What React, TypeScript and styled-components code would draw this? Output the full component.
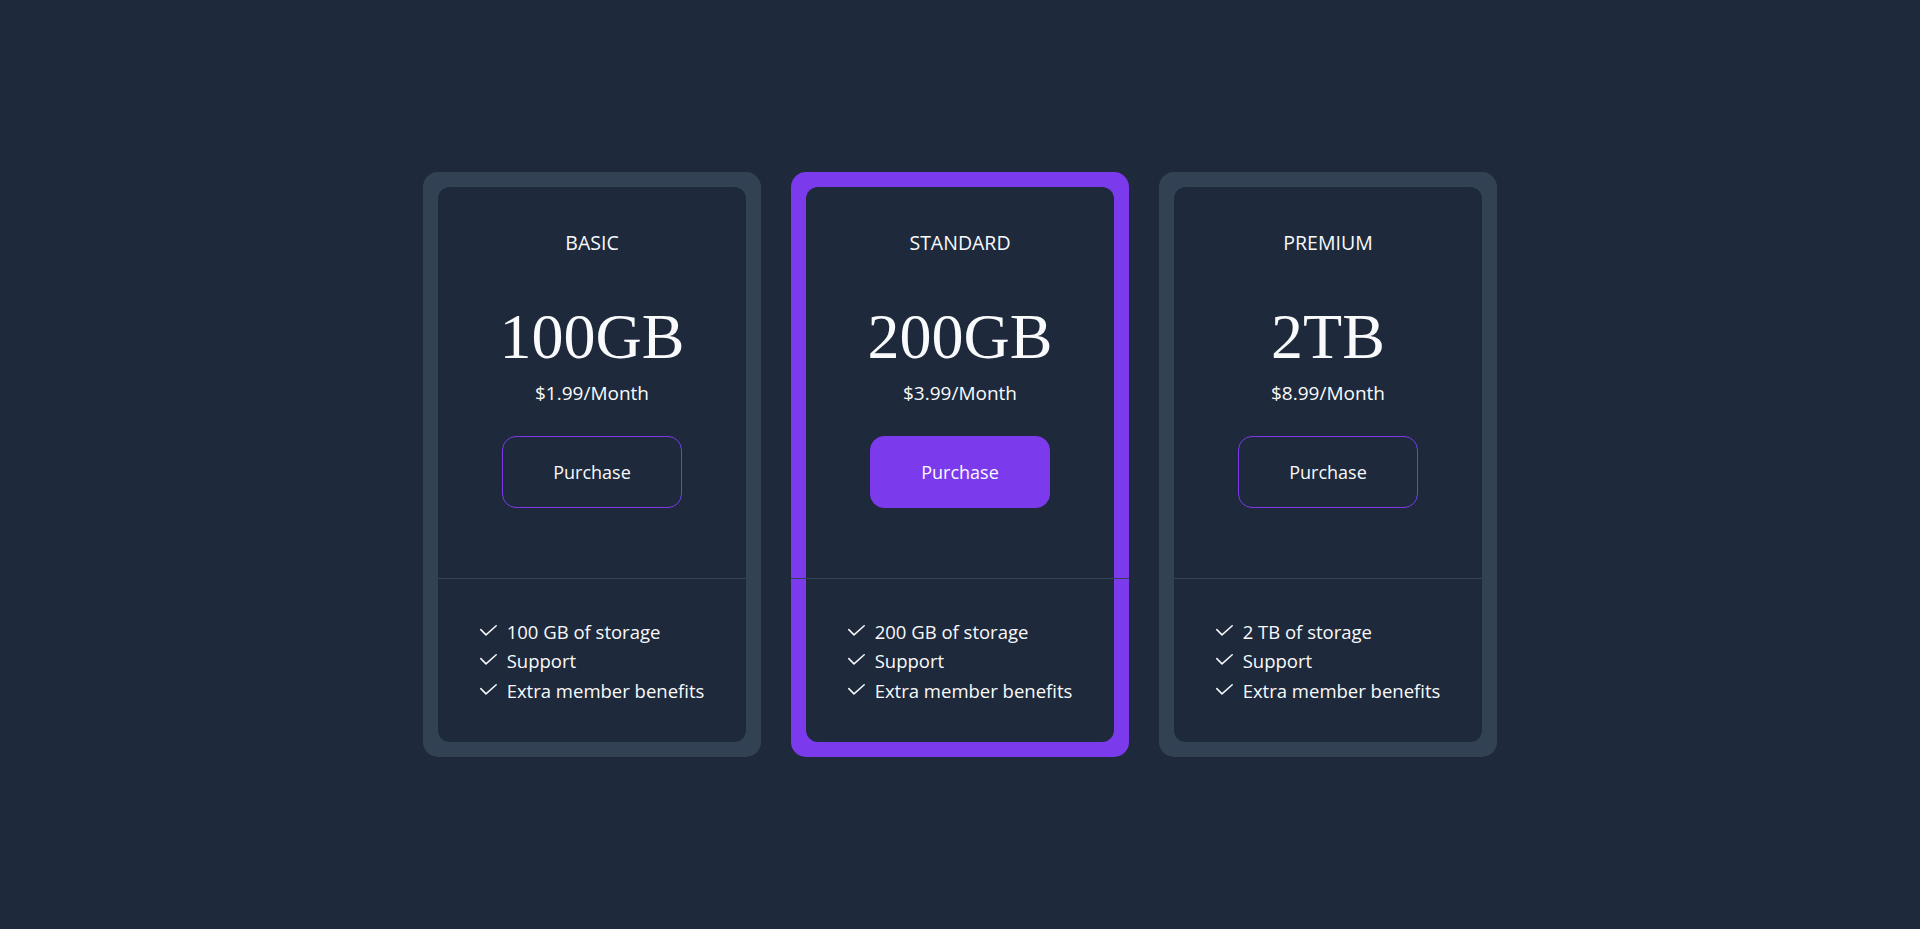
import React from "react";
import styled, { createGlobalStyle } from "styled-components";

const GlobalStyle = createGlobalStyle`
  * { box-sizing: border-box; }
  html, body { margin: 0; padding: 0; }
  body {
    background: #1e293b;
    color: #f8fafc;
    font-family: "Segoe UI", "Open Sans", "Noto Sans", sans-serif;
  }
`;

const Page = styled.main`
  min-height: 929px;
  display: flex;
  align-items: center;
  justify-content: center;
`;

const Plans = styled.section`
  display: flex;
  gap: 30px;
`;

const Frame = styled.article<{ $featured?: boolean }>`
  width: 338px;
  padding: 15px;
  border-radius: 15px;
  background: ${(p) => (p.$featured ? "#7c3aed" : "#334155")};
`;

const Inner = styled.div`
  background: #1e293b;
  border-radius: 12px;
  display: flex;
  flex-direction: column;
`;

const Top = styled.div`
  display: flex;
  flex-direction: column;
  align-items: center;
  padding: 44px 0 70px;
`;

const Tier = styled.h2`
  margin: 0;
  font-size: 19.5px;
  line-height: 24px;
  font-weight: 400;
  text-transform: uppercase;
`;

const Size = styled.div`
  margin-top: 46px;
  font-family: Georgia, "Liberation Serif", "DejaVu Serif", serif;
  font-variant-numeric: oldstyle-nums;
  font-size: 64px;
  line-height: 72px;
`;

const Price = styled.div`
  margin-top: 8px;
  font-size: 19px;
  line-height: 24px;
`;

const Purchase = styled.button<{ $featured?: boolean }>`
  margin-top: 31px;
  width: 180px;
  height: 72px;
  border-radius: 14px;
  border: 1px solid #7c3aed;
  background: ${(p) => (p.$featured ? "#7c3aed" : "transparent")};
  color: #f8fafc;
  font-family: inherit;
  font-size: 18px;
  cursor: pointer;
`;

const Divider = styled.hr`
  margin: 0 -15px;
  border: 0;
  height: 1px;
  background: #334155;
`;

const Features = styled.ul`
  list-style: none;
  margin: 0;
  padding: 38px 0 37px;
  align-self: center;
  font-size: 18.5px;
  line-height: 29.5px;
`;

const Feature = styled.li`
  display: flex;
  align-items: center;
  gap: 10px;
`;

const CheckIcon = () => (
  <svg width="17" height="11" viewBox="0 0 17 11" fill="none" style={{ marginTop: -3 }}>
    <path d="M0.8 4.6 L6 9.9 L16.2 0.8" stroke="#f8fafc" strokeWidth="1.5" strokeLinecap="round" strokeLinejoin="round" />
  </svg>
);

const plans = [
  { tier: "Basic", size: "100GB", price: "$1.99/Month", storage: "100 GB of storage" },
  { tier: "Standard", size: "200GB", price: "$3.99/Month", storage: "200 GB of storage", featured: true },
  { tier: "Premium", size: "2TB", price: "$8.99/Month", storage: "2 TB of storage" },
];

export default function App() {
  return (
    <>
      <GlobalStyle />
      <Page>
        <Plans>
          {plans.map((p) => (
            <Frame key={p.tier} $featured={p.featured}>
              <Inner>
                <Top>
                  <Tier>{p.tier}</Tier>
                  <Size>{p.size}</Size>
                  <Price>{p.price}</Price>
                  <Purchase $featured={p.featured}>Purchase</Purchase>
                </Top>
                <Divider />
                <Features>
                  {[p.storage, "Support", "Extra member benefits"].map((f) => (
                    <Feature key={f}>
                      <CheckIcon />
                      {f}
                    </Feature>
                  ))}
                </Features>
              </Inner>
            </Frame>
          ))}
        </Plans>
      </Page>
    </>
  );
}
